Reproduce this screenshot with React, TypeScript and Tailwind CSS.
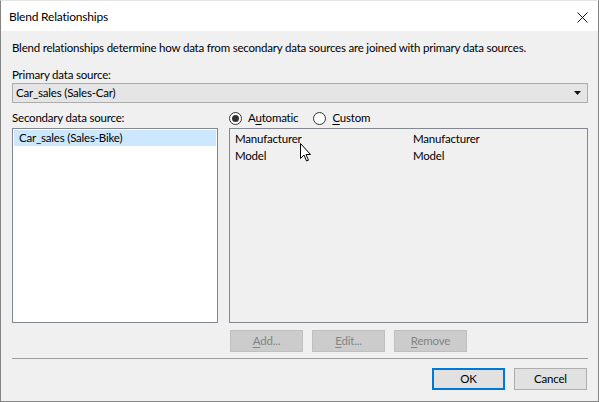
import React from "react";

const font = "font-['Lato','Liberation_Sans',sans-serif]";

function Radio({ checked }: { checked?: boolean }) {
  return (
    <span className="flex h-[13px] w-[13px] items-center justify-center rounded-full border border-[#333333] bg-white">
      {checked && <span className="h-[7px] w-[7px] rounded-full bg-[#333333]" />}
    </span>
  );
}

function DisabledButton({ hot, rest }: { hot: string; rest: string }) {
  return (
    <div className="flex h-[22px] w-[73px] items-center justify-center border border-[#bfbfbf] bg-[#cccccc] text-[#838383]">
      <span>
        <span className="underline underline-offset-2">{hot}</span>
        {rest}
      </span>
    </div>
  );
}

function Cursor() {
  return (
    <svg
      className="pointer-events-none absolute left-[300px] top-[143px]"
      width="13"
      height="20"
      viewBox="0 0 13 20"
    >
      <path
        d="M0.5 0.5 L0.5 15.5 L4 12 L6.5 18 L8.5 17.2 L6 11.5 L10.5 11.5 Z"
        fill="white"
        stroke="black"
        strokeWidth="1"
        strokeLinejoin="miter"
      />
    </svg>
  );
}

export default function App() {
  return (
    <div className={`${font} relative h-[402px] w-[599px] overflow-hidden whitespace-nowrap text-[11.5px] leading-4 tracking-[-0.2px] text-black`}>
      <div className="flex h-full flex-col border border-t-[#e5e5e5] border-x-[#858585] border-b-[#858585] bg-[#f0f0f0]">
        {/* title bar */}
        <div className="flex h-[30px] shrink-0 items-center justify-between bg-white pl-[8px] pr-[10px]">
          <span className="pt-[1px] text-[12px]">Blend Relationships</span>
          <svg width="11" height="11" viewBox="0 0 11 11" className="mt-[2px]">
            <path d="M0.5 0.5 L10.5 10.5 M10.5 0.5 L0.5 10.5" stroke="#111" strokeWidth="1" />
          </svg>
        </div>

        {/* body */}
        <div className="flex flex-1 flex-col pl-[11px] pr-[10px] pt-[9px]">
          <p>Blend relationships determine how data from secondary data sources are joined with primary data sources.</p>

          <p className="mt-[11px]">Primary data source:</p>
          <div className="flex h-[20px] items-center justify-between border border-[#adadad] bg-[#e5e5e5] pl-[3px] pr-[6px]">
            <span>Car_sales (Sales-Car)</span>
            <svg width="7" height="4" viewBox="0 0 7 4">
              <path d="M0 0 L7 0 L3.5 4 Z" fill="#111" />
            </svg>
          </div>

          <div className="mt-[7px] flex gap-[11px]">
            {/* secondary */}
            <div className="flex w-[206px] flex-col">
              <p className="h-[18px]">Secondary data source:</p>
              <div className="h-[195px] border border-[#828790] bg-white p-[1px]">
                <div className="flex h-[16px] items-center bg-[#cce8ff] pl-[5px]">Car_sales (Sales-Bike)</div>
              </div>
            </div>

            {/* relationships */}
            <div className="flex flex-1 flex-col">
              <div className="flex h-[18px] items-start">
                <div className="flex items-center gap-[6px]">
                  <Radio checked />
                  <span>
                    A<span className="underline underline-offset-2">u</span>tomatic
                  </span>
                </div>
                <div className="ml-[15px] flex items-center gap-[6px]">
                  <Radio />
                  <span>
                    <span className="underline underline-offset-2">C</span>ustom
                  </span>
                </div>
              </div>
              <div className="h-[195px] border border-[#828790] bg-[#f0f0f0] pl-[5px] pt-[2px]">
                <div className="grid grid-cols-[178px_1fr] gap-y-[1px]">
                  <span>Manufacturer</span>
                  <span>Manufacturer</span>
                  <span>Model</span>
                  <span>Model</span>
                </div>
              </div>
              <div className="mt-[7px] flex gap-[9px] pl-[1px]">
                <DisabledButton hot="A" rest="dd..." />
                <DisabledButton hot="E" rest="dit..." />
                <DisabledButton hot="R" rest="emove" />
              </div>
            </div>
          </div>

          <div className="mt-[6px] h-px bg-[#a0a0a0]" />

          <div className="mt-[9px] flex justify-end gap-[9px] pr-[1px]">
            <div className="flex h-[22px] w-[73px] items-center justify-center border-2 border-[#0078d7] bg-[#e1e1e1]">OK</div>
            <div className="flex h-[22px] w-[73px] items-center justify-center border border-[#adadad] bg-[#e1e1e1]">Cancel</div>
          </div>
        </div>
      </div>
      <Cursor />
    </div>
  );
}
